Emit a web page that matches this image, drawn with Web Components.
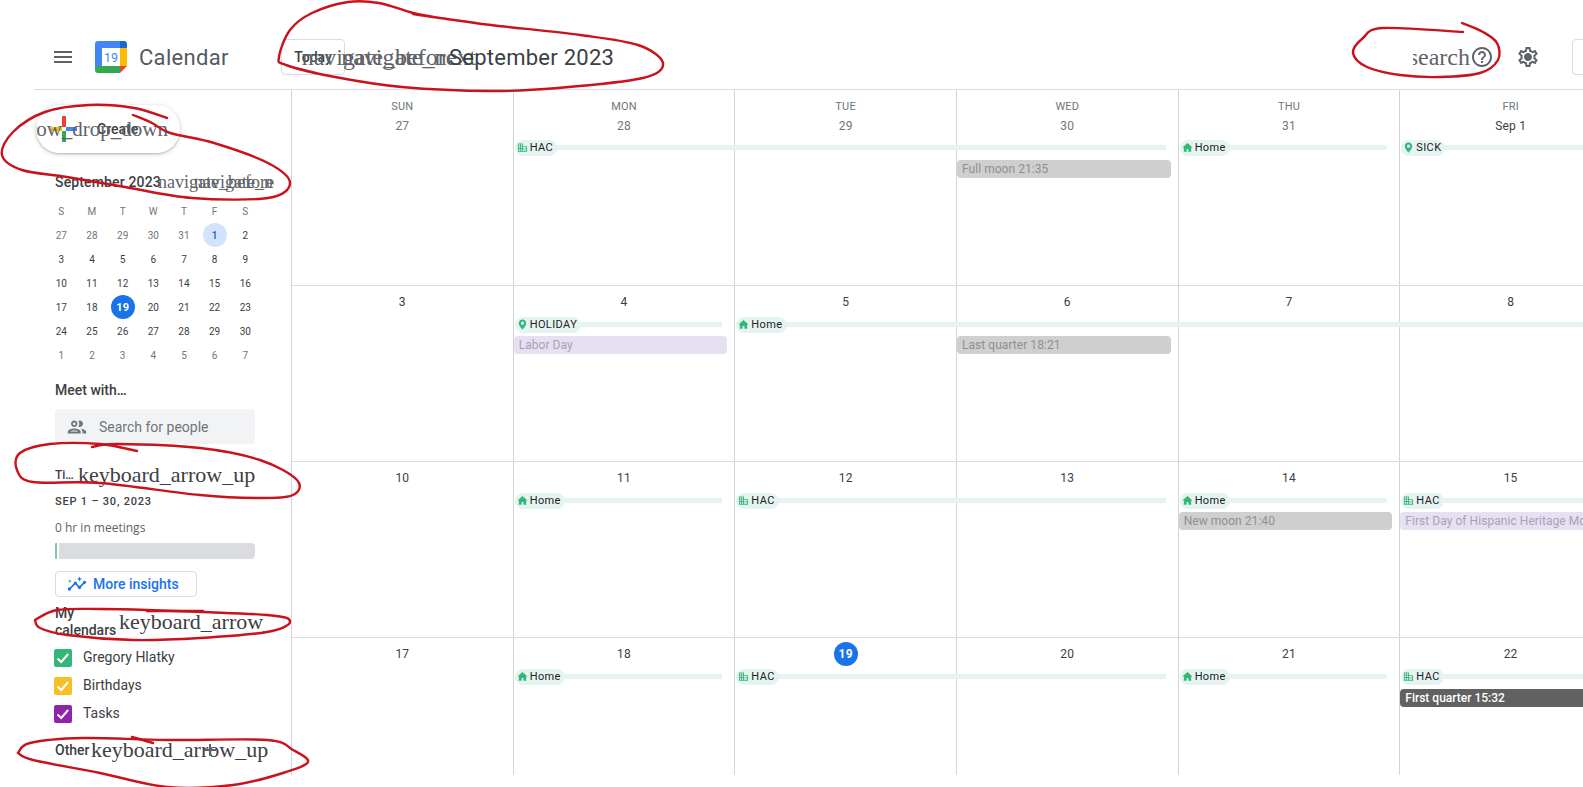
<!DOCTYPE html>
<html lang="en">
<head>
<meta charset="utf-8">
<title>Calendar</title>
<style>
  html, body { margin: 0; height: 787px; overflow: hidden; background: #fff; }
  body { position: relative; font-family: Roboto, "Liberation Sans", sans-serif; color: #3c4043; }
  .shell { display: block; margin-left: 34px; width: 1809px; }
  .main { display: flex; align-items: flex-start; }
</style>
</head>
<body>
<div class="shell">
  <gc-header></gc-header>
  <div class="main">
    <gc-sidebar>
      <gc-check-item color="#33b679">Gregory Hlatky</gc-check-item>
      <gc-check-item color="#f6bf26">Birthdays</gc-check-item>
      <gc-check-item color="#8e24aa">Tasks</gc-check-item>
    </gc-sidebar>
    <gc-grid>
      <gc-week height="195" first="1" dates="27,28,29,30,31,Sep 1,2" dim="5">
        <gc-span icon="building" style="grid-column:2/5;grid-row:2">HAC</gc-span>
        <gc-span icon="home" style="grid-column:5/6;grid-row:2">Home</gc-span>
        <gc-span icon="pin" style="grid-column:6/8;grid-row:2">SICK</gc-span>
        <gc-block kind="moon" style="grid-column:4/5;grid-row:3">Full moon 21:35</gc-block>
      </gc-week>
      <gc-week height="176" dates="3,4,5,6,7,8,9">
        <gc-span icon="pin" style="grid-column:2/3;grid-row:2">HOLIDAY</gc-span>
        <gc-span icon="home" style="grid-column:3/8;grid-row:2">Home</gc-span>
        <gc-block kind="holiday" style="grid-column:2/3;grid-row:3;margin-top:-2px">Labor Day</gc-block>
        <gc-block kind="moon" style="grid-column:4/5;grid-row:3;margin-top:-2px">Last quarter 18:21</gc-block>
      </gc-week>
      <gc-week height="176" dates="10,11,12,13,14,15,16">
        <gc-span icon="home" style="grid-column:2/3;grid-row:2">Home</gc-span>
        <gc-span icon="building" style="grid-column:3/5;grid-row:2">HAC</gc-span>
        <gc-span icon="home" style="grid-column:5/6;grid-row:2">Home</gc-span>
        <gc-span icon="building" style="grid-column:6/8;grid-row:2">HAC</gc-span>
        <gc-block kind="moon" style="grid-column:5/6;grid-row:3;margin-top:-2px">New moon 21:40</gc-block>
        <gc-block kind="holiday" style="grid-column:6/8;grid-row:3;margin-top:-2px">First Day of Hispanic Heritage Month</gc-block>
      </gc-week>
      <gc-week height="138" dates="17,18,19,20,21,22,23" today="19">
        <gc-span icon="home" style="grid-column:2/3;grid-row:2">Home</gc-span>
        <gc-span icon="building" style="grid-column:3/5;grid-row:2">HAC</gc-span>
        <gc-span icon="home" style="grid-column:5/6;grid-row:2">Home</gc-span>
        <gc-span icon="building" style="grid-column:6/8;grid-row:2">HAC</gc-span>
        <gc-block kind="quarter" style="grid-column:6/8;grid-row:3">First quarter 15:32</gc-block>
      </gc-week>
    </gc-grid>
  </div>
</div>
<gc-scribbles></gc-scribbles>

<script>
const ICONS = {
  menu: '<path d="M3 18h18v-2H3v2zm0-5h18v-2H3v2zm0-7v2h18V6H3z"/>',
  help: '<path d="M11 18h2v-2h-2v2zm1-16C6.48 2 2 6.48 2 12s4.48 10 10 10 10-4.48 10-10S17.52 2 12 2zm0 18c-4.41 0-8-3.59-8-8s3.59-8 8-8 8 3.59 8 8-3.59 8-8 8zm0-14c-2.21 0-4 1.79-4 4h2c0-1.1.9-2 2-2s2 .9 2 2c0 2-3 1.75-3 5h2c0-2.25 3-2.5 3-5 0-2.21-1.79-4-4-4z"/>',
  gear: '<path d="M19.43 12.98c.04-.32.07-.64.07-.98 0-.34-.03-.66-.07-.98l2.11-1.65c.19-.15.24-.42.12-.64l-2-3.46c-.09-.16-.26-.25-.44-.25-.06 0-.12.01-.17.03l-2.49 1c-.52-.4-1.08-.73-1.69-.98l-.38-2.65C14.46 2.18 14.25 2 14 2h-4c-.25 0-.46.18-.49.42l-.38 2.65c-.61.25-1.17.59-1.69.98l-2.49-1c-.06-.02-.12-.03-.18-.03-.17 0-.34.09-.43.25l-2 3.46c-.13.22-.07.49.12.64l2.11 1.65c-.04.32-.07.65-.07.98 0 .33.03.66.07.98l-2.11 1.65c-.19.15-.24.42-.12.64l2 3.46c.09.16.26.25.44.25.06 0 .12-.01.17-.03l2.49-1c.52.4 1.08.73 1.69.98l.38 2.65c.03.24.24.42.49.42h4c.25 0 .46-.18.49-.42l.38-2.65c.61-.25 1.17-.59 1.69-.98l2.49 1c.06.02.12.03.18.03.17 0 .34-.09.43-.25l2-3.46c.12-.22.07-.49-.12-.64l-2.11-1.65zm-1.98-1.71c.04.31.05.52.05.73 0 .21-.02.43-.05.73l-.14 1.13.89.7 1.08.84-.7 1.21-1.27-.51-1.04-.42-.9.68c-.43.32-.84.56-1.25.73l-1.06.43-.16 1.13-.2 1.35h-1.4l-.19-1.35-.16-1.13-1.06-.43c-.43-.18-.83-.41-1.23-.71l-.91-.7-1.06.43-1.27.51-.7-1.21 1.08-.84.89-.7-.14-1.13c-.03-.31-.05-.54-.05-.74s.02-.43.05-.73l.14-1.13-.89-.7-1.08-.84.7-1.21 1.27.51 1.04.42.9-.68c.43-.32.84-.56 1.25-.73l1.06-.43.16-1.13.2-1.35h1.39l.19 1.35.16 1.13 1.06.43c.43.18.83.41 1.23.71l.91.7 1.06-.43 1.27-.51.7 1.21-1.07.85-.89.7.14 1.13zM12 8c-2.21 0-4 1.79-4 4s1.79 4 4 4 4-1.79 4-4-1.79-4-4-4z"/>',
  people: '<path d="M9 13.75c-2.34 0-7 1.17-7 3.5V19h14v-1.75c0-2.33-4.66-3.5-7-3.5zM4.34 17c.84-.58 2.87-1.25 4.66-1.25s3.82.67 4.66 1.25H4.34zM9 12c1.93 0 3.5-1.57 3.5-3.5S10.93 5 9 5 5.5 6.57 5.5 8.5 7.07 12 9 12zm0-5c.83 0 1.5.67 1.5 1.5S9.83 10 9 10s-1.5-.67-1.5-1.5S8.17 7 9 7zm7.04 6.81c1.16.84 1.96 1.96 1.96 3.44V19h4v-1.75c0-2.02-3.5-3.17-5.96-3.44zM15 12c1.93 0 3.5-1.57 3.5-3.5S16.93 5 15 5c-.54 0-1.04.13-1.5.35.63.89 1 1.98 1 3.15s-.37 2.26-1 3.15c.46.22.96.35 1.5.35z"/>',
  insights: '<path d="M21 8c-1.45 0-2.26 1.44-1.93 2.51l-3.55 3.56c-.3-.09-.74-.09-1.04 0l-2.55-2.55C12.27 10.45 11.46 9 10 9c-1.45 0-2.27 1.44-1.93 2.52l-4.56 4.55C2.44 15.74 1 16.55 1 18c0 1.1.9 2 2 2 1.45 0 2.26-1.44 1.93-2.51l4.55-4.56c.3.09.74.09 1.04 0l2.55 2.55C12.73 16.55 13.54 18 15 18c1.45 0 2.27-1.44 1.93-2.52l3.56-3.55c1.07.33 2.51-.48 2.51-1.93 0-1.1-.9-2-2-2zM15 9l.94-2.07L18 6l-2.06-.93L15 3l-.92 2.07L12 6l2.08.93zM3.5 11 4 9l2-.5L4 8l-.5-2L3 8l-2 .5L3 9z"/>',
  home: '<path d="M10 21v-6h4v6h6v-9h3L12 2 1 12h3v9z"/>',
  pin: '<path fill-rule="evenodd" d="M12 1C7.6 1 4 4.6 4 9c0 6 8 14 8 14s8-8 8-14c0-4.400-3.600-8-8-8zm0 11.500a3.500 3.500 0 1 1 0-7 3.500 3.500 0 0 1 0 7z"/>',
  building: '<path fill-rule="evenodd" d="M2 3h11v6h9v12H2V3zm2 2v3h2.500V5H4zm4.500 0v3H11V5H8.500zM4 10v3h2.500v-3H4zm4.500 0v3H11v-3H8.500zM4 15v4h2.500v-4H4zm4.500 0v4H11v-4H8.500zM13 11v3h7v-3h-7zm0 5v3h7v-3h-7z"/>'
};

function icon(name, size, color) {
  return `<svg width="${size}" height="${size}" viewBox="0 0 24 24" fill="${color}" aria-hidden="true">${ICONS[name]}</svg>`;
}

class GcHeader extends HTMLElement {
  constructor() {
    super();
    const shadow = this.attachShadow({ mode: "open" });
    shadow.innerHTML = `
      <style>
        :host { display: flex; align-items: center; box-sizing: border-box; width: 1626px; height: 90px; padding-top: 25px; border-bottom: 1px solid #dadce0; color: #3c4043; font-family: Roboto, sans-serif; }
        svg { display: block; flex: none; }
        .menu { margin-left: 17px; }
        .logo { margin-left: 20px; }
        .name { margin-left: 12px; width: 142px; font-size: 22px; letter-spacing: .3px; color: #55595e; }
        .today { flex: none; box-sizing: border-box; width: 64px; height: 36px; display: flex; align-items: center; justify-content: center; border: 1px solid #dadce0; border-radius: 4px; font-size: 14px; font-weight: 500; }
        .lig { flex: none; display: flex; justify-content: center; font: 24px "Liberation Serif", serif; color: #5f6368; white-space: nowrap; }
        .before { width: 30px; margin-left: 19px; }
        .next { width: 29px; }
        .title { flex: none; margin-left: 26px; font-size: 22px; letter-spacing: .25px; white-space: nowrap; }
        .spacer { flex: 1; }
        .search { width: 57px; overflow: hidden; justify-content: flex-end; }
        .gear { margin-left: 22px; }
        .view { flex: none; box-sizing: border-box; width: 88px; height: 36px; margin-left: 32px; border: 1px solid #dadce0; border-radius: 4px; }
      </style>
      <span class="menu">${icon("menu", 24, "#5f6368")}</span>
      <svg class="logo" width="32" height="32" viewBox="0 0 32 32" aria-hidden="true">
        <path d="M3 0h22v7H7v18H0V3a3 3 0 0 1 3-3z" fill="#4285f4"/>
        <path d="M25 0h4a3 3 0 0 1 3 3v4h-7z" fill="#1967d2"/>
        <path d="M25 7h7v18h-7z" fill="#fbbc04"/>
        <path d="M0 25h25v7H3a3 3 0 0 1-3-3z" fill="#34a853"/>
        <path d="M25 25h7l-7 7z" fill="#ea4335"/>
        <path d="M7 7h18v18H7z" fill="#fff"/>
        <text x="16" y="21" text-anchor="middle" font-family="Roboto, sans-serif" font-size="12.500" fill="#4285f4">19</text>
      </svg>
      <span class="name">Calendar</span>
      <span class="today">Today</span>
      <span class="lig before">navigate_before</span>
      <span class="lig next">navigate_next</span>
      <span class="title">September 2023</span>
      <span class="spacer"></span>
      <span class="lig search">search</span>
      ${icon("help", 24, "#5f6368")}
      <span class="gear">${icon("gear", 24, "#5f6368")}</span>
      <span class="view"></span>
    `;
  }
}

class GcMiniMonth extends HTMLElement {
  constructor() {
    super();
    const shadow = this.attachShadow({ mode: "open" });
    const heads = ["S", "M", "T", "W", "T", "F", "S"];
    const days = [27, 28, 29, 30, 31, 1, 2, 3, 4, 5, 6, 7, 8, 9, 10, 11, 12, 13, 14, 15, 16, 17, 18, 19, 20, 21, 22, 23, 24, 25, 26, 27, 28, 29, 30, 1, 2, 3, 4, 5, 6, 7];
    const cells = days.map((d, i) => {
      let cls = "";
      if (i < 5 || i >= 35) cls = "dim";
      if (i === 5) cls = "sel";
      if (i === 23) cls = "now";
      return `<span class="c"><b class="${cls}">${d}</b></span>`;
    }).join("");
    shadow.innerHTML = `
      <style>
        :host { display: grid; grid-template-columns: repeat(7, 30.67px); grid-auto-rows: 24px; width: 215px; margin: 6px 0 0 -9px; font: 400 10px Roboto, sans-serif; color: #3c4043; }
        .c { display: flex; align-items: center; justify-content: center; }
        .h { color: #70757a; }
        b { display: flex; align-items: center; justify-content: center; width: 24px; height: 24px; border-radius: 50%; font-weight: 400; }
        .dim { color: #70757a; }
        .sel { background: #d2e3fc; color: #185abc; font-weight: 500; }
        .now { background: #1a73e8; color: #fff; font-weight: 700; font-size: 11px; }
      </style>
      ${heads.map((h) => `<span class="c h">${h}</span>`).join("")}
      ${cells}
    `;
  }
}

class GcCheckItem extends HTMLElement {
  constructor() {
    super();
    const shadow = this.attachShadow({ mode: "open" });
    const color = this.getAttribute("color");
    shadow.innerHTML = `
      <style>
        :host { display: flex; align-items: center; height: 28px; margin-left: -1px; font: 14px Roboto, sans-serif; color: #3c4043; }
        .box { width: 18px; height: 18px; border-radius: 2px; background: ${color}; margin-right: 11px; }
        .text { padding-bottom: 2px; }
        svg { display: block; }
      </style>
      <span class="box"><svg width="18" height="18" viewBox="0 0 18 18" fill="none" stroke="#fff" stroke-width="2"><path d="M3.500 9.500l3.700 3.500 7-8"/></svg></span>
      <span class="text"><slot></slot></span>
    `;
  }
}

class GcSidebar extends HTMLElement {
  constructor() {
    super();
    const shadow = this.attachShadow({ mode: "open" });
    shadow.innerHTML = `
      <style>
        :host { display: flex; flex-direction: column; flex: none; box-sizing: border-box; width: 257px; padding-left: 21px; font: 14px Roboto, sans-serif; color: #3c4043; }
        .lig { font: 22px "Liberation Serif", serif; color: #3c4043; white-space: nowrap; }
        svg { display: block; flex: none; }
        .wrap { position: relative; height: 48px; margin: 15px 0 0 -19px; width: 144px; border-radius: 24px; box-shadow: 0 1px 2px rgba(60,64,67,.3), 0 1px 4px 1px rgba(60,64,67,.15); }
        .create { position: relative; display: flex; align-items: center; box-sizing: border-box; width: 144px; height: 48px; border-radius: 24px; overflow: hidden; background: #fff; }
        .plus { margin-left: 15px; }
        .create-label { margin-left: 20px; font-weight: 500; font-size: 14px; }
        .lig.drop { position: absolute; right: 12px; top: 50%; transform: translateY(-50%); font-size: 21px; color: #5f6368; }
        .mini-head { display: flex; align-items: center; width: 219px; height: 22px; margin-top: 18px; overflow: hidden; font-weight: 500; letter-spacing: .15px; white-space: nowrap; }
        .mini-head .month { width: 103px; flex: none; }
        .lig.mini-nav { flex: none; width: 36px; font-size: 18px; letter-spacing: 0; color: #5f6368; }
        .label { font-weight: 500; }
        .meet { height: 20px; line-height: 20px; margin-top: 13px; }
        .people { display: flex; align-items: center; box-sizing: border-box; width: 200px; height: 35px; margin-top: 9px; padding-left: 11px; background: #f1f3f4; border-radius: 4px; color: #70757a; }
        .people svg { margin-right: 11px; }
        .row { display: flex; align-items: center; white-space: nowrap; }
        .time { height: 28px; margin-top: 17px; font-size: 12px; font-weight: 500; }
        .time .t { width: 23px; }
        .time .lig { font-weight: 400; }
        .range { height: 14px; line-height: 14px; margin-top: 6px; font-size: 11px; font-weight: 500; letter-spacing: .8px; }
        .hours { height: 16px; line-height: 16px; margin-top: 10px; font: 12px "Open Sans", Roboto, sans-serif; color: #5f6368; }
        .bar { display: flex; width: 200px; height: 16px; margin-top: 8px; }
        .bar i { width: 2px; margin-right: 2px; background: #81c9a6; border-radius: 1px 0 0 1px; }
        .bar u { flex: 1; background: #dadce0; border-radius: 0 4px 4px 0; }
        .insights { display: flex; align-items: center; box-sizing: border-box; width: 142px; height: 26px; margin-top: 12px; padding-left: 11px; border: 1px solid #dadce0; border-radius: 4px; color: #1a73e8; font-weight: 500; }
        .insights svg { margin-right: 6px; }
        .mine { height: 34px; margin-top: 8px; line-height: 17px; }
        .mine .t { width: 64px; white-space: normal; flex: none; }
        .mine .k { width: 145px; overflow: hidden; flex: none; font-weight: 400; }
        .items { margin-top: 5px; }
        .other { position: relative; height: 28px; margin-top: 8px; }
        .other .t { width: 36px; overflow: hidden; flex: none; }
        .other .lig { font-weight: 400; }
        .add { position: absolute; left: 148px; top: 7px; width: 14px; height: 14px; }
      </style>
      <div class="wrap"><div class="create">
        <svg class="plus" width="26" height="26" viewBox="0 0 26 26" aria-hidden="true">
          <path d="M11 0h4v11h-4z" fill="#ea4335"/>
          <path d="M15 11h11v4H15z" fill="#4285f4"/>
          <path d="M11 15h4v11h-4z" fill="#34a853"/>
          <path d="M0 11h11v4H0z" fill="#fbbc04"/>
        </svg>
        <span class="create-label">Create</span>
        <span class="lig drop">arrow_drop_down</span>
      </div></div>
      <div class="mini-head">
        <span class="month">September 2023</span>
        <span class="lig mini-nav">navigate_before</span>
        <span class="lig mini-nav">navigate_next</span>
      </div>
      <gc-mini-month></gc-mini-month>
      <div class="label meet">Meet with…</div>
      <div class="people">${icon("people", 22, "#70757a")}<span>Search for people</span></div>
      <div class="row time"><span class="t">Ti…</span><span class="lig">keyboard_arrow_up</span></div>
      <div class="range">SEP 1 – 30, 2023</div>
      <div class="hours">0 hr in meetings</div>
      <div class="bar"><i></i><u></u></div>
      <div class="insights">${icon("insights", 20, "#1a73e8")}<span>More insights</span></div>
      <div class="row label mine"><span class="t">My calendars</span><span class="lig k">keyboard_arrow_up</span></div>
      <div class="items"><slot></slot></div>
      <div class="row label other"><span class="t">Other</span><span class="lig">keyboard_arrow_up</span>
        <svg class="add" viewBox="0 0 14 14" fill="#5f6368" aria-hidden="true"><path d="M6 1h2v5h5v2H8v5H6V8H1V6h5z"/></svg>
      </div>
    `;
  }
}

class GcGrid extends HTMLElement {
  constructor() {
    super();
    const shadow = this.attachShadow({ mode: "open" });
    shadow.innerHTML = `
      <style>
        :host { display: flex; flex-direction: column; flex: none; }
      </style>
      <slot></slot>
    `;
  }
}

class GcWeek extends HTMLElement {
  constructor() {
    super();
    const shadow = this.attachShadow({ mode: "open" });
    const first = this.hasAttribute("first");
    const height = this.getAttribute("height");
    const dates = this.getAttribute("dates").split(",");
    const dim = Number(this.getAttribute("dim") || 0);
    const today = this.getAttribute("today");
    const names = ["SUN", "MON", "TUE", "WED", "THU", "FRI", "SAT"];
    const cells = dates.map((d, i) => `
      <div class="day" style="grid-column:${i + 1}">
        ${first ? `<span class="dow">${names[i]}</span>` : ""}
        <span class="num ${i < dim ? "dim" : ""} ${d === today ? "now" : ""}">${d}</span>
      </div>`).join("");
    shadow.innerHTML = `
      <style>
        :host { display: block; }
        .grid { display: grid; box-sizing: border-box; height: ${height}px; grid-template-columns: repeat(7, 221.67px); grid-template-rows: ${first ? "47px" : "28px"} 21px 21px 1fr; ${first ? "" : "border-top: 1px solid #dadce0;"} font-family: Roboto, sans-serif; }
        .day { grid-row: 1 / -1; display: flex; flex-direction: column; align-items: center; box-sizing: border-box; border-left: 1px solid #d2d4d7; padding-top: ${first ? "9px" : "4px"}; }
        .dow { height: 16px; line-height: 16px; margin-bottom: -1px; font-size: 11px; font-weight: 400; letter-spacing: .2px; color: #70757a; }
        .num { display: flex; align-items: center; justify-content: center; min-width: 24px; height: 24px; border-radius: 50%; font-size: 12px; font-weight: 400; letter-spacing: .2px; color: #3c4043; white-space: nowrap; }
        .num.dim { color: #70757a; }
        .num.now { background: #1a73e8; color: #fff; font-weight: 700; }
      </style>
      <div class="grid">${cells}<slot></slot></div>
    `;
  }
}

class GcSpan extends HTMLElement {
  constructor() {
    super();
    const shadow = this.attachShadow({ mode: "open" });
    const name = this.getAttribute("icon");
    shadow.innerHTML = `
      <style>
        :host { display: grid; align-items: center; min-width: 0; margin: 0 12px 0 2px; font: 400 11px Roboto, sans-serif; letter-spacing: .4px; color: #202124; }
        .line, .pill { grid-area: 1 / 1; }
        .line { height: 5px; background: #e6f4f1; }
        .pill { justify-self: start; display: flex; align-items: center; gap: 2px; height: 16px; padding: 0 4px 0 2px; background: #e6f4f1; border-radius: 8px; }
        svg { display: block; flex: none; }
      </style>
      <div class="line"></div>
      <div class="pill">${icon(name, 11, "#33b679")}<slot></slot></div>
    `;
  }
}

class GcBlock extends HTMLElement {
  constructor() {
    super();
    const shadow = this.attachShadow({ mode: "open" });
    const kind = this.getAttribute("kind");
    const colors = {
      moon: ["#cfcfcf", "#8f8f8f"],
      holiday: ["#e6e1f1", "#a9a0bd"],
      quarter: ["#616161", "#fff"]
    }[kind];
    shadow.innerHTML = `
      <style>
        :host { display: flex; align-items: center; min-width: 0; box-sizing: border-box; height: 18px; align-self: center; margin-left: 1px; margin-right: 7px; padding-left: 5px; border-radius: 4px; background: ${colors[0]}; color: ${colors[1]}; font: ${kind === "quarter" ? 500 : 400} 12px Roboto, sans-serif; letter-spacing: ${kind === "quarter" ? 0 : ".05px"}; white-space: nowrap; overflow: hidden; }
      </style>
      <slot></slot>
    `;
  }
}

// red marker rings drawn over the screenshot
class GcScribbles extends HTMLElement {
  constructor() {
    super();
    const shadow = this.attachShadow({ mode: "open" });
    const rings = [
      [[413,14],[440,18],[491,25],[580,35],[638,45],[663,63],[643,78],[558,88],[491,91],[402,87],[335,77],[286,65],[279,57],[290,30],[312,13],[348,2],[379,3],[413,13],[440,18]],
      [[167,118],[134,108],[89,105],[45,112],[13,132],[2,155],[22,170],[67,177],[125,187],[192,198],[268,198],[290,183],[268,163],[214,143],[170,133],[152,123],[133,115]],
      [[1463,32],[1383,28],[1363,38],[1353,53],[1367,67],[1400,75],[1440,77],[1480,73],[1498,60],[1497,43],[1483,32],[1462,23]],
      [[92,447],[117,444],[200,448],[260,460],[297,480],[293,495],[260,498],[200,495],[100,483],[33,482],[17,470],[20,453],[50,444],[100,444],[137,451]],
      [[147,611],[203,611]],
      [[35,620],[57,610],[100,609],[147,610],[267,615],[290,622],[267,632],[200,638],[133,640],[67,635],[40,628],[35,620]],
      [[132,737],[153,743]],
      [[18,753],[30,743],[83,738],[167,740],[267,740],[293,750],[308,762],[283,773],[233,785],[167,787],[100,773],[33,760],[18,753]]
    ];
    const smooth = (p) => {
      let d = `M${p[0][0]} ${p[0][1]}`;
      for (let i = 0; i < p.length - 1; i++) {
        const a = p[Math.max(i - 1, 0)], b = p[i], c = p[i + 1], e = p[Math.min(i + 2, p.length - 1)];
        d += `C${b[0] + (c[0] - a[0]) / 6} ${b[1] + (c[1] - a[1]) / 6} ${c[0] - (e[0] - b[0]) / 6} ${c[1] - (e[1] - b[1]) / 6} ${c[0]} ${c[1]}`;
      }
      return d;
    };
    shadow.innerHTML = `
      <style>
        :host { position: absolute; left: 0; top: 0; width: 1583px; height: 787px; pointer-events: none; }
        svg { display: block; }
      </style>
      <svg width="1583" height="787" fill="none" stroke="#c9121c" stroke-width="2.400" stroke-linecap="round" aria-hidden="true">
        ${rings.map((r) => `<path d="${smooth(r)}"/>`).join("")}
      </svg>
    `;
  }
}

customElements.define("gc-header", GcHeader);
customElements.define("gc-mini-month", GcMiniMonth);
customElements.define("gc-check-item", GcCheckItem);
customElements.define("gc-sidebar", GcSidebar);
customElements.define("gc-grid", GcGrid);
customElements.define("gc-week", GcWeek);
customElements.define("gc-span", GcSpan);
customElements.define("gc-block", GcBlock);
customElements.define("gc-scribbles", GcScribbles);
</script>
</body>
</html>
